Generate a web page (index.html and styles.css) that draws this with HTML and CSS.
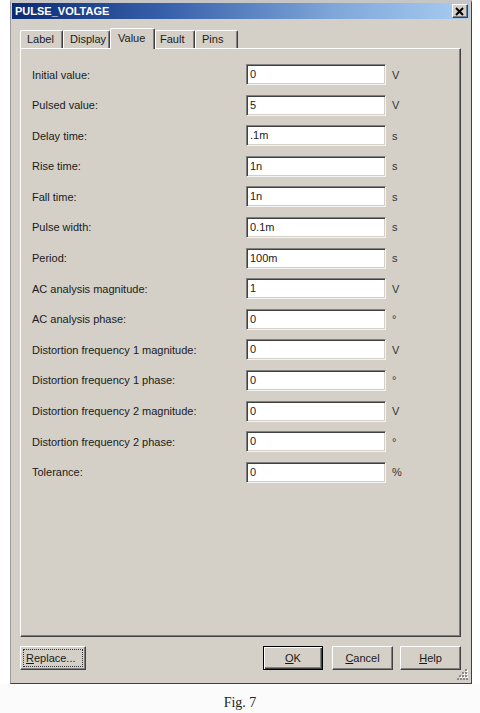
FILE: index.html
```html
<!DOCTYPE html>
<html>
<head>
<meta charset="utf-8">
<link rel="stylesheet" href="styles.css">
</head>
<body>
<div class="window">
  <div class="titlebar">
    <span class="title">PULSE_VOLTAGE</span>
    <span class="close"><svg width="10" height="9" viewBox="0 0 10 9"><path d="M1 1 L8 8 M8 1 L1 8" stroke="#000" stroke-width="2"/></svg></span>
  </div>
  <div class="tabs">
    <div class="tab t-label">Label</div>
    <div class="tab t-display">Display</div>
    <div class="tab t-value active">Value</div>
    <div class="tab t-fault">Fault</div>
    <div class="tab t-pins">Pins</div>
  </div>
  <div class="panel">
    <div class="form">
      <span class="lbl">Initial value:</span><div class="field">0</div><span class="unit">V</span>
      <span class="lbl">Pulsed value:</span><div class="field">5</div><span class="unit">V</span>
      <span class="lbl">Delay time:</span><div class="field">.1m</div><span class="unit">s</span>
      <span class="lbl">Rise time:</span><div class="field">1n</div><span class="unit">s</span>
      <span class="lbl">Fall time:</span><div class="field">1n</div><span class="unit">s</span>
      <span class="lbl">Pulse width:</span><div class="field">0.1m</div><span class="unit">s</span>
      <span class="lbl">Period:</span><div class="field">100m</div><span class="unit">s</span>
      <span class="lbl">AC analysis magnitude:</span><div class="field">1</div><span class="unit">V</span>
      <span class="lbl">AC analysis phase:</span><div class="field">0</div><span class="unit">°</span>
      <span class="lbl">Distortion frequency 1 magnitude:</span><div class="field">0</div><span class="unit">V</span>
      <span class="lbl">Distortion frequency 1 phase:</span><div class="field">0</div><span class="unit">°</span>
      <span class="lbl">Distortion frequency 2 magnitude:</span><div class="field">0</div><span class="unit">V</span>
      <span class="lbl">Distortion frequency 2 phase:</span><div class="field">0</div><span class="unit">°</span>
      <span class="lbl">Tolerance:</span><div class="field">0</div><span class="unit">%</span>
    </div>
  </div>
  <div class="buttons">
    <div class="btn btn-replace"><span class="focus"><u>R</u>eplace...</span></div>
    <div class="right-btns">
      <div class="btn btn-ok"><span><u>O</u>K</span></div>
      <div class="btn btn-cancel"><span><u>C</u>ancel</span></div>
      <div class="btn btn-help"><span><u>H</u>elp</span></div>
    </div>
  </div>
  <svg class="grip" width="12" height="12" viewBox="0 0 12 12">
    <g fill="#ffffff"><rect x="9" y="1" width="2" height="2"/><rect x="6" y="4" width="2" height="2"/><rect x="9" y="4" width="2" height="2"/><rect x="3" y="7" width="2" height="2"/><rect x="6" y="7" width="2" height="2"/><rect x="9" y="7" width="2" height="2"/></g>
    <g fill="#8a8a8a"><rect x="8" y="0" width="2" height="2"/><rect x="5" y="3" width="2" height="2"/><rect x="8" y="3" width="2" height="2"/><rect x="2" y="6" width="2" height="2"/><rect x="5" y="6" width="2" height="2"/><rect x="8" y="6" width="2" height="2"/><rect x="0" y="9" width="2" height="2"/><rect x="3" y="9" width="2" height="2"/><rect x="6" y="9" width="2" height="2"/><rect x="9" y="9" width="2" height="2"/></g>
  </svg>
</div>
<div class="caption">Fig. 7</div>
</body>
</html>
```

FILE: styles.css
```css
html, body {
  margin: 0;
  padding: 0;
  background: #ffffff;
}
body {
  width: 480px;
  height: 713px;
  overflow: hidden;
  font-family: "Liberation Sans", Arial, sans-serif;
  font-size: 11px;
  color: #1a1a1a;
}
.window {
  position: relative;
  box-sizing: border-box;
  margin-left: 10px;
  width: 462px;
  height: 684px;
  background: #d4d0c8;
  border-top: 3px solid #c6c6c6;
  border-left: 1px solid #9a9a9a;
  border-right: 1px solid #404040;
  border-bottom: 1px solid #404040;
  padding: 0 1px 1px 1px;
}
.titlebar {
  height: 16px;
  display: flex;
  align-items: center;
  justify-content: space-between;
  background: linear-gradient(to right, #0c2a74 0%, #3a63ad 35%, #7ea6d8 70%, #a8cdf2 100%);
  padding: 0 2px 0 3px;
}
.title {
  color: #fff;
  font-weight: bold;
  font-size: 11px;
}
.close {
  box-sizing: border-box;
  width: 16px;
  height: 14px;
  background: #d4d0c8;
  border-top: 1px solid #fff;
  border-left: 1px solid #fff;
  border-right: 1px solid #404040;
  border-bottom: 1px solid #404040;
  box-shadow: inset -1px -1px #808080;
  display: flex;
  align-items: center;
  justify-content: center;
}
.tabs {
  display: flex;
  align-items: flex-end;
  height: 21px;
  margin: 9px 0 -1px 8px;
}
.tab {
  box-sizing: border-box;
  height: 18px;
  margin-bottom: 1px;
  padding: 2px 0 0 6px;
  background: #d4d0c8;
  border-top: 1px solid #fff;
  border-left: 1px solid #fff;
  border-right: 1px solid #404040;
  border-radius: 2px 2px 0 0;
  box-shadow: inset -1px 0 #808080;
  white-space: nowrap;
}
.t-label { width: 43px; }
.t-display { width: 47px; }
.t-value { width: 45px; }
.t-fault { width: 40px; padding-left: 4px; }
.t-pins { width: 43px; }
.tab.active {
  position: relative;
  z-index: 1;
  height: 21px;
  margin-bottom: 0;
  padding: 3px 0 0 7px;
}
.panel {
  box-sizing: border-box;
  margin-left: 8px;
  width: 441px;
  height: 589px;
  border-top: 1px solid #fff;
  border-left: 1px solid #fff;
  border-right: 1px solid #404040;
  border-bottom: 1px solid #404040;
  box-shadow: inset -1px -1px #808080;
  padding: 15px 0 0 11px;
}
.form {
  display: grid;
  grid-template-columns: 214px 140px auto;
  grid-auto-rows: 21px;
  row-gap: 9.6px;
  align-items: center;
}
.lbl {
  white-space: nowrap;
}
.field {
  box-sizing: border-box;
  height: 21px;
  background: #fff;
  border-top: 1px solid #808080;
  border-left: 1px solid #808080;
  border-right: 1px solid #f4f4f4;
  border-bottom: 1px solid #f4f4f4;
  box-shadow: inset 1px 1px #404040, inset -1px -1px #d4d0c8;
  padding: 3px 0 0 3px;
  font-size: 11px;
  color: #222;
}
.unit {
  padding-left: 6px;
  color: #333;
}
.buttons {
  display: flex;
  justify-content: space-between;
  margin: 9px 9px 0 8px;
}
.right-btns {
  display: flex;
}
.btn {
  box-sizing: border-box;
  height: 24px;
  background: #d4d0c8;
  border-top: 1px solid #fff;
  border-left: 1px solid #fff;
  border-right: 1px solid #404040;
  border-bottom: 1px solid #404040;
  box-shadow: inset -1px -1px #808080;
  display: flex;
  align-items: center;
  justify-content: center;
}
.btn u {
  text-decoration: underline;
  text-underline-offset: 1px;
}
.btn-replace {
  width: 66px;
  padding: 2px;
}
.btn-replace .focus {
  flex: 1;
  align-self: stretch;
  display: flex;
  align-items: center;
  justify-content: flex-start;
  padding-left: 2px;
  border: 1px dotted #333;
}
.btn-ok {
  width: 60px;
  border: 1px solid #000;
  box-shadow: inset 1px 1px #fff, inset -1px -1px #404040, inset -2px -2px #808080;
}
.btn-cancel {
  width: 61px;
  margin-left: 9px;
}
.btn-help {
  width: 61px;
  margin-left: 7px;
}
.grip {
  position: absolute;
  right: 2px;
  bottom: 2px;
}
.caption {
  height: 29px;
  background: #fbfbfb;
  font-family: "Liberation Serif", "Times New Roman", serif;
  font-size: 14px;
  line-height: 14px;
  text-align: center;
  padding-top: 12px;
  box-sizing: border-box;
  color: #222;
}
```
